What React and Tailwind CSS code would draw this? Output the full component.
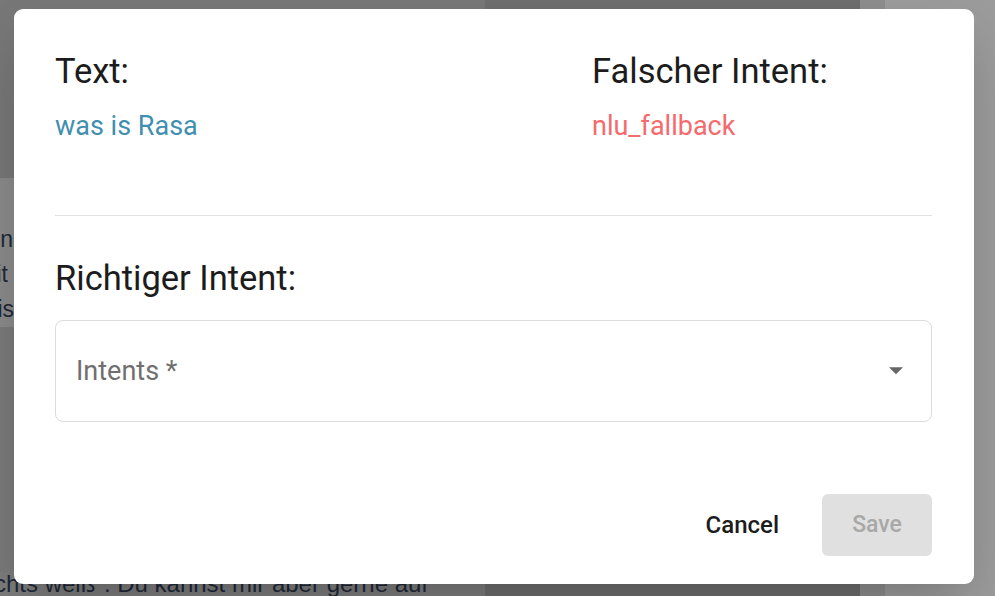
import React from 'react';

const Backdrop = () => {
    return (
        <div className="absolute inset-0 flex" style={{ fontFamily: '"Liberation Sans", Arial, sans-serif' }}>
            <div className="w-[485px] flex flex-col">
                <div className="h-[183px] bg-[#777777]"></div>
                <div className="h-[150px] bg-[#8a8a8a] pt-[44px] text-[23px] leading-[35px] text-[#1f2837]">
                    <div className="w-[13px] flex justify-end whitespace-nowrap">Wenn ich eine Frage nicht verstehen kann, dann</div>
                    <div className="w-[8px] flex justify-end whitespace-nowrap">antworte ich mit meiner Standardantwort, somit</div>
                    <div className="w-[14px] flex justify-end whitespace-nowrap">bekommst du von mir einen kleinen Hinweis</div>
                </div>
                <div className="h-[251px] bg-[#7a7a7a]"></div>
                <div className="flex-1 bg-[#7c7c7c] text-[24px] leading-[24px] text-[#1f2837] whitespace-nowrap -ml-[6px]">chts weiß". Du kannst mir aber gerne auf</div>
            </div>
            <div className="w-[375px] flex flex-col">
                <div className="flex-1 bg-[#6d6d6d]"></div>
            </div>
            <div className="w-[25px] bg-[#8d8d8d]"></div>
            <div className="flex-1 bg-[#9b9b9b]"></div>
        </div>
    )
}

const ArrowDrop = () => (
    <svg width="34" height="34" viewBox="0 0 24 24" fill="#666666">
        <path d="M7 10l5 5 5-5z" />
    </svg>
)

export default function App() {
    return (
        <div className="relative w-[995px] h-[596px] overflow-hidden">
            <Backdrop />
            <div
                className="absolute left-[14px] top-[9px] w-[960px] h-[575px] bg-white rounded-[9px] shadow-2xl px-[41px] pt-[42px] pb-[28px] flex flex-col"
                style={{ fontFamily: 'Roboto, "Noto Sans", sans-serif' }}
            >
                <div className="flex">
                    <div className="w-[537px]">
                        <h2 className="text-[34.5px] leading-[40px] text-[#1c1c1c]">Text:</h2>
                        <p className="text-[27px] leading-[34px] mt-[18px] text-[#3f8fb0]">was is Rasa</p>
                    </div>
                    <div>
                        <h2 className="text-[34.5px] leading-[40px] text-[#1c1c1c]">Falscher Intent:</h2>
                        <p className="text-[27px] leading-[34px] mt-[18px] text-[#f56a6c]">nlu_fallback</p>
                    </div>
                </div>
                <div className="mt-[72px] h-px bg-[#e2e2e2] mr-[1px]"></div>
                <h2 className="mt-[42px] text-[34.5px] leading-[40px] text-[#1c1c1c]">Richtiger Intent:</h2>
                <div className="mt-[22px] h-[102px] border border-[#dcdcdc] rounded-[8px] flex items-center justify-between pl-[20px] pr-[18px] mr-[1px]">
                    <span className="text-[27px] text-[#6f6f6f]">Intents *</span>
                    <span className="-mt-[2px]"><ArrowDrop /></span>
                </div>
                <div className="mt-auto flex justify-end items-center gap-[23px]">
                    <button className="h-[62px] px-[20px] text-[24px] font-medium text-[#1c1c1c] rounded-[6px]">Cancel</button>
                    <button className="h-[62px] w-[110px] mr-[1px] text-[23px] font-medium text-[#a8a8a8] bg-[#e0e0e0] rounded-[6px]">Save</button>
                </div>
            </div>
        </div>
    )
}
